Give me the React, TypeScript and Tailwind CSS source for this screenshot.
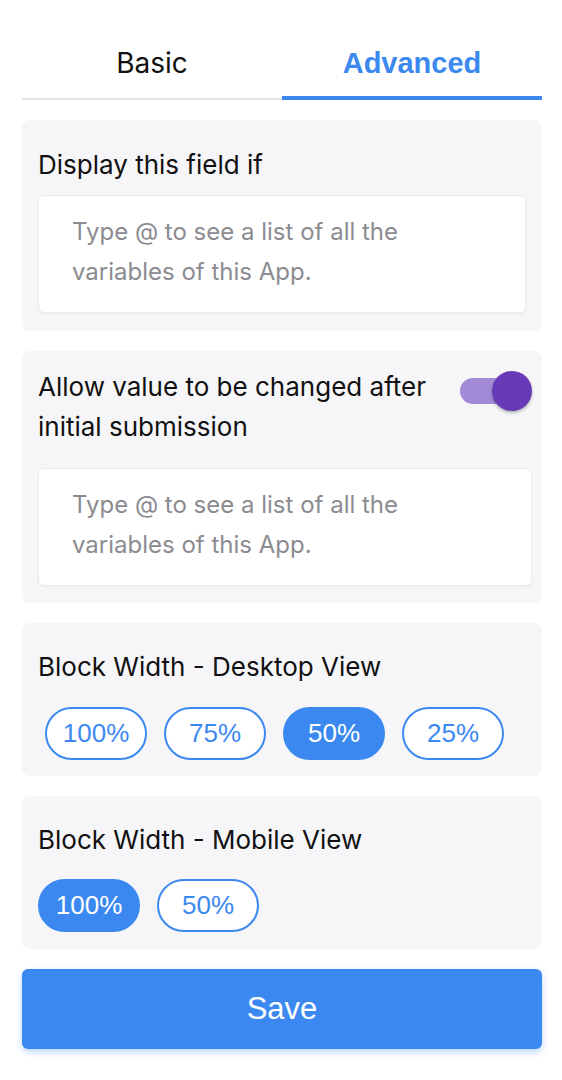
import React, { useState } from 'react'

const inter = { fontFamily: 'Inter, "Noto Sans", sans-serif' }
const arial = { fontFamily: '"Liberation Sans", Arial, sans-serif' }

function VarInput({ className = '' }: { className?: string }) {
  return (
    <div
      className={`bg-white rounded-[6px] border border-[#ebebef] shadow-[0_1px_2px_rgba(0,0,0,0.04)] pl-[33px] pr-4 pt-[16px] pb-[20px] text-[24px] leading-[40px] text-[#8b8b90] ${className}`}
    >
      Type @ to see a list of all the
      <br />
      variables of this App.
    </div>
  )
}

function Pill({ label, active, onClick }: { label: string; active: boolean; onClick: () => void }) {
  return (
    <button
      onClick={onClick}
      style={arial}
      className={
        active
          ? 'w-[102px] h-[53px] rounded-full border-2 border-[#3b89f0] bg-[#3b89f0] text-white text-[26px]'
          : 'w-[102px] h-[53px] rounded-full border-2 border-[#3b89f0] bg-white text-[#3b89f0] text-[26px]'
      }
    >
      {label}
    </button>
  )
}

export default function App() {
  const [tab, setTab] = useState<'basic' | 'advanced'>('advanced')
  const [allowChange, setAllowChange] = useState(true)
  const [desktop, setDesktop] = useState('50%')
  const [mobile, setMobile] = useState('100%')

  return (
    <div className="w-[562px] min-h-[1080px] bg-white pl-[22px] pr-[20px]" style={inter}>
      {/* tabs */}
      <div className="flex">
        <button
          onClick={() => setTab('basic')}
          className={
            tab === 'basic'
              ? 'flex-1 pt-[45px] pb-[15px] border-b-4 border-[#3b89f0] text-[28px] leading-[36px] text-[#3b89f0] font-bold'
              : 'flex-1 pt-[45px] pb-[17px] border-b-2 border-[#e3e3e6] text-[28px] leading-[36px] text-[#111]'
          }
        >
          Basic
        </button>
        <button
          onClick={() => setTab('advanced')}
          style={arial}
          className={
            tab === 'advanced'
              ? 'flex-1 pt-[45px] pb-[15px] border-b-4 border-[#3b89f0] text-[29px] leading-[36px] text-[#3b89f0] font-bold'
              : 'flex-1 pt-[45px] pb-[17px] border-b-2 border-[#e3e3e6] text-[29px] leading-[36px] text-[#111]'
          }
        >
          Advanced
        </button>
      </div>

      <div className="flex flex-col gap-[20px] mt-[20px]">
        {/* display condition */}
        <div className="bg-[#f6f6f9] rounded-[8px] pl-4 pr-4 pt-[25px] pb-[18px]">
          <div className="text-[26px] leading-[40px] text-[#111]">Display this field if</div>
          <VarInput className="mt-[10px]" />
        </div>

        {/* allow change */}
        <div className="bg-[#f6f6f9] rounded-[8px] pl-4 pr-[10px] pt-[16px] pb-[17px]">
          <div className="flex justify-between">
            <div className="w-[410px] text-[26px] leading-[40px] text-[#111]">
              Allow value to be changed after initial submission
            </div>
            <button
              onClick={() => setAllowChange(!allowChange)}
              className="relative w-[72px] h-[40px] mt-[4px] shrink-0"
            >
              <span
                className={
                  allowChange
                    ? 'absolute left-0 top-[7px] w-[68px] h-[26px] rounded-full bg-[#a28bd6]'
                    : 'absolute left-0 top-[7px] w-[68px] h-[26px] rounded-full bg-[#c9c9cf]'
                }
              />
              <span
                className={
                  allowChange
                    ? 'absolute right-0 top-0 w-[40px] h-[40px] rounded-full bg-[#673ab7] shadow-[0_2px_3px_rgba(0,0,0,0.25)]'
                    : 'absolute left-0 top-0 w-[40px] h-[40px] rounded-full bg-white shadow-[0_2px_3px_rgba(0,0,0,0.25)]'
                }
              />
            </button>
          </div>
          <VarInput className="mt-[21px]" />
        </div>

        {/* desktop width */}
        <div className="bg-[#f6f6f9] rounded-[8px] pl-4 pr-4 pt-[24px] pb-[16px]">
          <div className="text-[26px] leading-[40px] text-[#111]">Block Width - Desktop View</div>
          <div className="flex gap-[17px] mt-[20px] ml-[7px]">
            {['100%', '75%', '50%', '25%'].map((v) => (
              <Pill key={v} label={v} active={desktop === v} onClick={() => setDesktop(v)} />
            ))}
          </div>
        </div>

        {/* mobile width */}
        <div className="bg-[#f6f6f9] rounded-[8px] pl-4 pr-4 pt-[24px] pb-[17px]">
          <div className="text-[26px] leading-[40px] text-[#111]">Block Width - Mobile View</div>
          <div className="flex gap-[17px] mt-[19px]">
            {['100%', '50%'].map((v) => (
              <Pill key={v} label={v} active={mobile === v} onClick={() => setMobile(v)} />
            ))}
          </div>
        </div>

        <button
          style={arial}
          className="h-[80px] rounded-[6px] bg-[#3b89f0] text-white text-[31px] shadow-[0_3px_6px_rgba(59,137,240,0.35)]"
        >
          Save
        </button>
      </div>
    </div>
  )
}
